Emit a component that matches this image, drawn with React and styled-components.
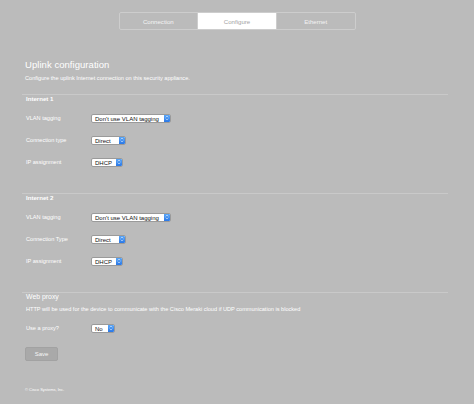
import React from 'react'
import styled, { createGlobalStyle } from 'styled-components'

const GlobalStyle = createGlobalStyle`
  html, body {
    margin: 0;
    padding: 0;
    background: #bbbbbb;
  }
  body {
    font-family: "Liberation Sans", Arial, sans-serif;
    color: #ffffff;
  }
`

const Page = styled.div`
  width: 474px;
  height: 404px;
  overflow: hidden;
  padding-top: 12px;
  box-sizing: border-box;
`

const TabBar = styled.nav`
  display: flex;
  width: 237px;
  height: 18px;
  margin: 0 auto;
  border: 1px solid #cdcdcd;
  border-radius: 2px;
  box-sizing: border-box;
`

const Tab = styled.div`
  flex: 1;
  display: flex;
  align-items: center;
  justify-content: center;
  font-size: 6.1px;
  color: ${p => (p.$active ? '#a4a4a4' : '#f4f4f4')};
  background: ${p => (p.$active ? '#ffffff' : 'transparent')};
  border-left: ${p => (p.$first ? 'none' : '1px solid #cdcdcd')};
`

const Content = styled.main`
  padding: 0 26px 0 22px;
`

const Heading = styled.h1`
  margin: 29px 0 0 3px;
  font-size: 9.5px;
  line-height: 11px;
  font-weight: normal;
  letter-spacing: 0.05px;
`

const Intro = styled.p`
  margin: 5px 0 0 3px;
  font-size: 5.6px;
  line-height: 7px;
`

const Section = styled.section`
  border-top: 1px solid #c9c9c9;
  margin-top: ${p => p.$top || 0}px;
  padding-bottom: ${p => p.$bottom || 0}px;
`

const SectionTitle = styled.h2`
  margin: 0 0 0 4px;
  font-size: ${p => (p.$plain ? '6.9px' : '6.1px')};
  line-height: ${p => (p.$plain ? '8px' : '7px')};
  font-weight: ${p => (p.$plain ? 'normal' : 'bold')};
`

const Rows = styled.div`
  margin-top: ${p => p.$top || 5}px;
`

const Row = styled.div`
  display: flex;
  align-items: center;
  height: 22px;
  padding-left: 4px;
`

const Label = styled.span`
  width: 65px;
  font-size: 5.6px;
  line-height: 7px;
`

const SelectBox = styled.div`
  display: flex;
  align-items: stretch;
  width: ${p => p.$width}px;
  height: 9px;
  background: #ffffff;
  border: 0.5px solid #9a9a9a;
  border-radius: 2px;
  box-sizing: border-box;
  overflow: hidden;
`

const SelectText = styled.span`
  flex: 1;
  padding-left: 3px;
  font-size: 6px;
  line-height: 8px;
  color: #111111;
  white-space: nowrap;
`

const Stepper = styled.span`
  width: 6px;
  display: flex;
  align-items: center;
  justify-content: center;
  background: linear-gradient(#5aa6f7, #2b78e6);
`

const Note = styled.p`
  margin: 5px 0 0 4px;
  font-size: 5.6px;
  line-height: 7px;
`

const SaveButton = styled.button`
  display: block;
  margin: 8px 0 0 3px;
  width: 33px;
  height: 14px;
  padding: 0;
  background: #a9a9a9;
  border: 1px solid #a2a2a2;
  border-radius: 2px;
  color: #f6f6f6;
  font-family: "Liberation Sans", Arial, sans-serif;
  font-size: 6px;
`

const Footer = styled.footer`
  margin: 26px 0 0 3px;
  font-size: 4px;
  line-height: 5px;
`

const Arrows = () => (
  <svg width="4" height="6" viewBox="0 0 4 6">
    <path d="M0.8 2.3 L2 1.1 L3.2 2.3" fill="none" stroke="#fff" strokeWidth="0.6" />
    <path d="M0.8 3.7 L2 4.9 L3.2 3.7" fill="none" stroke="#fff" strokeWidth="0.6" />
  </svg>
)

const Select = ({ value, width }) => (
  <SelectBox $width={width}>
    <SelectText>{value}</SelectText>
    <Stepper>
      <Arrows />
    </Stepper>
  </SelectBox>
)

const Field = ({ label, value, width }) => (
  <Row>
    <Label>{label}</Label>
    <Select value={value} width={width} />
  </Row>
)

const internets = [
  { title: 'Internet 1', typeLabel: 'Connection type' },
  { title: 'Internet 2', typeLabel: 'Connection Type' },
]

export default function App() {
  return (
    <>
      <GlobalStyle />
      <Page>
        <TabBar>
          <Tab $first>Connection</Tab>
          <Tab $active>Configure</Tab>
          <Tab>Ethernet</Tab>
        </TabBar>
        <Content>
          <Heading>Uplink configuration</Heading>
          <Intro>Configure the uplink Internet connection on this security appliance.</Intro>
          {internets.map((s, i) => (
            <Section key={s.title} $top={i === 0 ? 12 : 0} $bottom={20}>
              <SectionTitle>{s.title}</SectionTitle>
              <Rows>
                <Field label="VLAN tagging" value="Don't use VLAN tagging" width={80} />
                <Field label={s.typeLabel} value="Direct" width={35} />
                <Field label="IP assignment" value="DHCP" width={32} />
              </Rows>
            </Section>
          ))}
          <Section>
            <SectionTitle $plain>Web proxy</SectionTitle>
            <Note>HTTP will be used for the device to communicate with the Cisco Meraki cloud if UDP communication is blocked</Note>
            <Rows $top={4}>
              <Field label="Use a proxy?" value="No" width={24} />
            </Rows>
          </Section>
          <SaveButton>Save</SaveButton>
          <Footer>© Cisco Systems, Inc.</Footer>
        </Content>
      </Page>
    </>
  )
}
